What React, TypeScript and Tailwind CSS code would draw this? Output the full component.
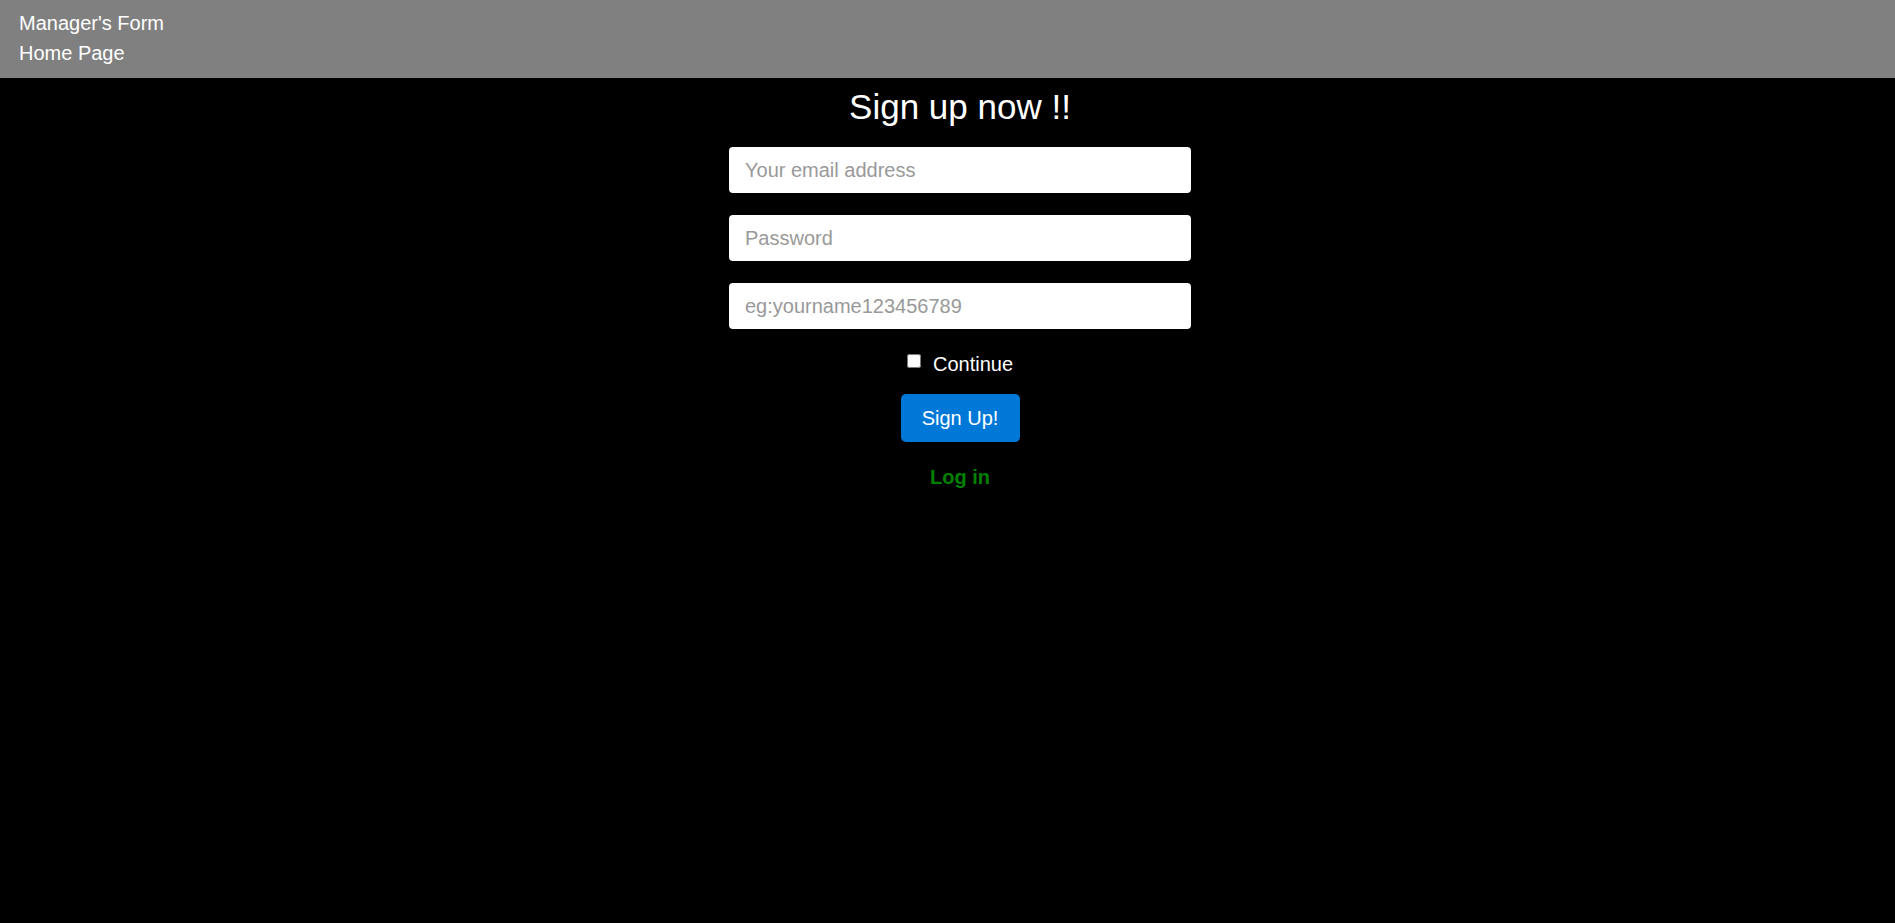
import { useState } from "react";

const font = "font-['Arial','Liberation_Sans',sans-serif]";

function Header() {
  return (
    <header className="h-[78px] bg-[#808080] pl-[19px] pt-[8px] text-[20px] leading-[30px] text-white">
      <div>Manager's Form</div>
      <div>Home Page</div>
    </header>
  );
}

function Field({ placeholder, type = "text" }: { placeholder: string; type?: string }) {
  return (
    <input
      type={type}
      placeholder={placeholder}
      className="block h-[46px] w-[462px] rounded-[4px] bg-white px-4 text-[20px] text-black outline-none placeholder:text-[#999]"
    />
  );
}

export default function App() {
  const [agree, setAgree] = useState(false);
  return (
    <div className={`min-h-screen bg-black ${font}`}>
      <Header />
      <main className="flex flex-col items-center pl-[25px]">
        <h1 className="mt-[9px] text-[35px] leading-[40px] text-white">Sign up now !!</h1>
        <div className="mt-[20px] flex flex-col gap-[22px]">
          <Field placeholder="Your email address" type="email" />
          <Field placeholder="Password" type="password" />
          <Field placeholder="eg:yourname123456789" />
        </div>
        <label className="mt-[24px] flex items-start gap-[12px] text-[20px] leading-[23px] text-white">
          <input
            type="checkbox"
            checked={agree}
            onChange={() => setAgree(!agree)}
            className="m-0 mt-[1px] h-[14px] w-[14px]"
          />
          Continue
        </label>
        <button className="mt-[18px] h-[48px] w-[119px] rounded-[5px] bg-[#0078d7] text-[20px] text-white">
          Sign Up!
        </button>
        <a href="#" className="mt-[24px] text-[20px] font-bold leading-[23px] text-[#008000]">
          Log in
        </a>
      </main>
    </div>
  );
}
